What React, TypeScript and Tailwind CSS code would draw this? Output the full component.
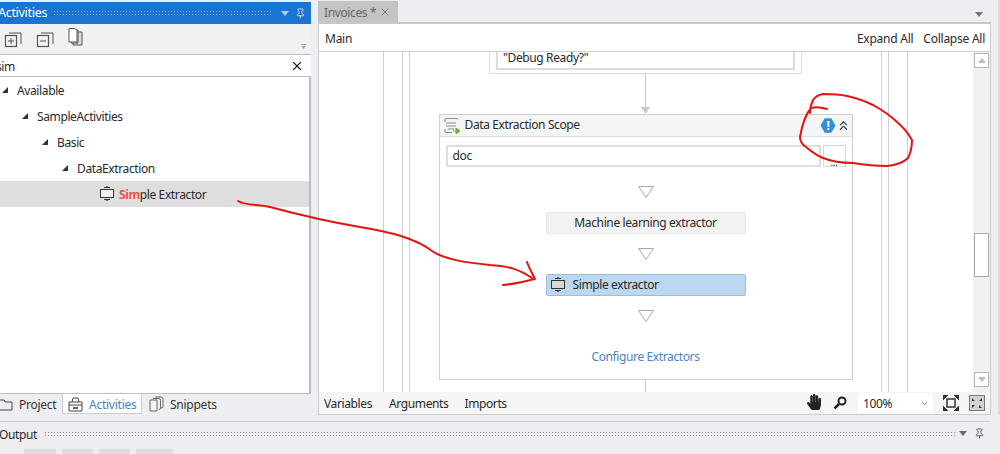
import React from "react";
import { ChevronsUp, ChevronDown, X, Pin } from "lucide-react";
import { FaHandPaper } from "react-icons/fa";

function Extractor({ fill }: { fill: string }) {
  return (
    <svg width="16" height="16" viewBox="0 0 16 16" className="shrink-0">
      <rect x="1.500" y="3.500" width="13" height="8" fill={fill} stroke="#333" />
      <path d="M5 1.500h6M5 13.500h6" stroke="#333" fill="none" />
      <path d="M8 0l2 1.500H6zM8 15l2-1.500H6z" fill="#333" />
    </svg>
  );
}

function Down() {
  return (
    <svg width="16" height="12" viewBox="0 0 16 12" className="shrink-0">
      <path d="M0.500 0.500h15L8 11.500z" fill="#fff" stroke="#a8a8a8" />
    </svg>
  );
}

function TreeRow({ indent, label }: { indent: string; label: string }) {
  return (
    <div className={`flex h-[26px] items-center ${indent}`}>
      <svg width="8" height="8" viewBox="0 0 8 8" className="mr-[8px]">
        <path d="M7 1v6H1z" fill="#333" />
      </svg>
      <span className="pt-[2px]">{label}</span>
    </div>
  );
}

function ActivitiesPanel() {
  return (
    <aside className="flex w-[311px] shrink-0 flex-col pt-[2px]">
      <div className="flex h-[22px] items-center bg-[#1b74d2] text-white">
        <span className="-ml-[2px] w-[55px] shrink-0 pt-[1px] text-[12.500px] tracking-[-0.3px]">Activities</span>
        <div className="h-[6px] w-[219px] bg-[radial-gradient(#7db4ee_0.8px,transparent_1px)] bg-[length:3px_3px]" />
        <svg width="8" height="5" viewBox="0 0 8 5" className="ml-[9px]">
          <path d="M0 0h8L4 5z" fill="#a9cdf2" />
        </svg>
        <Pin size={11} className="ml-[6px] text-[#cfe3f8]" />
      </div>
      <div className="relative flex h-[30px] items-center bg-[#f1f1f3] pl-[4px]">
        <svg width="18" height="18" viewBox="0 0 18 18" fill="none" stroke="#555">
          <path d="M5 3h12v11" />
          <rect x="1.500" y="5.500" width="11" height="11" strokeWidth="1.200" />
          <path d="M4 11h6M7 8v6" />
        </svg>
        <svg width="18" height="18" viewBox="0 0 18 18" fill="none" stroke="#555" className="ml-[14px]">
          <path d="M5 3h12v11" />
          <rect x="1.500" y="5.500" width="11" height="11" strokeWidth="1.200" />
          <path d="M4 11h6" />
        </svg>
        <svg width="16" height="18" viewBox="0 0 16 18" fill="none" stroke="#555" className="ml-[14px] -mt-[4px]">
          <path d="M5 4h9v13H5z" fill="#ddd" />
          <path d="M3 2h7v13H3z" fill="#f1f1f3" />
          <path d="M1 0.500h6l2 2V14H1z" fill="#fff" />
        </svg>
        <div className="absolute bottom-[5px] right-[5px] flex flex-col items-center gap-[1px]">
          <div className="h-px w-[5px] bg-[#aaa]" />
          <svg width="5" height="3" viewBox="0 0 5 3">
            <path d="M0 0h5L2.500 3z" fill="#aaa" />
          </svg>
        </div>
      </div>
      <div className="flex h-[23px] items-center justify-between border-y border-[#bdbdbd] bg-white pr-[7px]">
        <span className="-ml-[4px] pt-[2px]">sim</span>
        <X size={14} className="text-[#222]" />
      </div>
      <div className="h-[317px] border-r-2 border-b border-[#bdbdbd] bg-white">
        <TreeRow indent="pl-[1px]" label="Available" />
        <TreeRow indent="pl-[21px]" label="SampleActivities" />
        <TreeRow indent="pl-[41px]" label="Basic" />
        <TreeRow indent="pl-[61px]" label="DataExtraction" />
        <div className="flex h-[26px] items-center bg-[#dedede] pl-[99px]">
          <Extractor fill="#f2f2ec" />
          <span className="ml-[4px] pt-[2px]">
            <span className="font-bold text-[#f0524a]">Sim</span>ple Extractor
          </span>
        </div>
      </div>
      <div className="flex h-[20px] items-stretch tracking-[-0.25px] text-[#333]">
        <div className="flex w-[62px] items-center">
          <svg width="14" height="13" viewBox="0 0 14 13" fill="none" stroke="#444" className="-ml-[1px]">
            <path d="M0 2h5l1 2h7v8H0" />
          </svg>
          <span className="ml-[6px] pt-[2px]">Project</span>
        </div>
        <div className="flex w-[80px] items-center border-x border-b border-[#ccc] bg-white pl-[5px] text-[#4a80bd]">
          <svg width="15" height="16" viewBox="0 0 15 16" fill="none" stroke="#444">
            <path d="M1 6h13v9H1zM4 6l1-4h5l1 4M1 9h13" />
            <path d="M5 11l5 2M5 13l5-2" />
          </svg>
          <span className="ml-[6px] pt-[2px]">Activities</span>
        </div>
        <div className="flex items-center pl-[7px]">
          <svg width="15" height="16" viewBox="0 0 15 16" fill="none" stroke="#666">
            <path d="M6 1h6q2 0 2 2v8q0 1-2 1" />
            <path d="M4 2.500h6q1.500 0 1.500 2v8q0 1-1.500 1" />
            <path d="M1 4h7v11H1z" fill="#f4f4f4" />
          </svg>
          <span className="ml-[6px] pt-[2px]">Snippets</span>
        </div>
      </div>
    </aside>
  );
}

function Canvas() {
  return (
    <div className="flex min-w-0 flex-1 bg-white pl-[64px] pr-[65px]">
      <div className="flex flex-1 border-x border-[#cfcfcf] pl-[18px] pr-[18px]">
        <div className="flex flex-1 border-x border-[#cfcfcf] pl-[6px] pr-[6px]">
          <div className="flex flex-1 flex-col items-center border-x border-[#cfcfcf]">
            <div className="h-[22px] w-[313px] shrink-0 border-x border-b border-[#dcdcdc] px-[6px] pb-[3px]">
              <div className="h-full border-x-2 border-b-2 border-[#dcdcdc] pl-[5px] leading-[12px]">"Debug Ready?"</div>
            </div>
            <div className="h-[33px] w-px shrink-0 bg-[#c8c8c8]" />
            <svg width="9" height="7" viewBox="0 0 9 7" className="shrink-0">
              <path d="M0 0h9L4.500 7z" fill="#c8c8c8" />
            </svg>
            <div className="flex h-[266px] w-[414px] shrink-0 flex-col items-center border border-[#d0d0d0]">
              <div className="flex h-[22px] w-full shrink-0 items-center border-b border-[#e0e0e0] bg-[#f5f5f5] pl-[3px] pr-[1px]">
                <svg width="18" height="17" viewBox="0 0 18 17" fill="none" stroke="#8a8a8a" className="shrink-0">
                  <path d="M2 5V2.500q0-1 1-1h11q1 0 1 1M2 12v2.500q0 1 1 1h6" />
                  <path d="M3 6h10M3 9h10M5 12h6" />
                  <path d="M10 14h4M13 11l4 3-4 3z" stroke="#6bb04a" fill="#6bb04a" />
                </svg>
                <span className="ml-[4px] flex-1 pb-[2px]">Data Extraction Scope</span>
                <div className="z-10 flex h-[15px] w-[15px] items-center justify-center bg-[#2e90dc] text-[12px] font-bold leading-none text-white [clip-path:polygon(28%_2%,72%_2%,100%_50%,72%_98%,28%_98%,0_50%)]">!</div>
                <ChevronsUp size={15} className="text-[#34495e]" />
              </div>
              <div className="mt-[8px] flex w-full shrink-0 justify-between px-[6px]">
                <div className="flex h-[22px] w-[375px] items-center border-2 border-[#dedede] pl-[5px]">doc</div>
                <div className="flex h-[22px] w-[23px] items-end justify-center border border-[#d8d8d8] text-[10px] leading-[8px]">...</div>
              </div>
              <div className="mt-[19px]"><Down /></div>
              <div className="mt-[14px] flex h-[22px] w-[200px] shrink-0 items-center justify-center rounded-[2px] border border-[#e5e5e5] bg-[#f2f2f2] pb-[1px]">
                Machine learning extractor
              </div>
              <div className="mt-[14px]"><Down /></div>
              <div className="mt-[14px] flex h-[22px] w-[200px] shrink-0 items-center rounded-[2px] border border-[#9dbdd8] bg-[#bbd8f0] pl-[3px]">
                <Extractor fill="#d8d8d0" />
                <span className="ml-[7px]">Simple extractor</span>
              </div>
              <div className="mt-[14px]"><Down /></div>
              <div className="mt-[26px] text-[#4a85c0]">Configure Extractors</div>
            </div>
            <div className="h-[12px] w-px shrink-0 bg-[#c8c8c8]" />
          </div>
        </div>
      </div>
    </div>
  );
}

function Scrollbar() {
  return (
    <div className="flex w-[17px] shrink-0 flex-col items-center bg-[#f1f1f1] pt-[1px] pb-[5px]">
      <div className="flex h-[15px] w-[15px] items-center justify-center border border-[#b5b5b5] bg-white">
        <svg width="8" height="5" viewBox="0 0 8 5"><path d="M4 0l4 5H0z" fill="#bbb" /></svg>
      </div>
      <div className="mt-[165px] h-[44px] w-[15px] border border-[#aaa] bg-white" />
      <div className="mt-auto flex h-[15px] w-[15px] items-center justify-center border border-[#b5b5b5] bg-white">
        <svg width="8" height="5" viewBox="0 0 8 5"><path d="M0 0h8L4 5z" fill="#bbb" /></svg>
      </div>
    </div>
  );
}

function Designer() {
  return (
    <main className="flex w-[673px] shrink-0 flex-col">
      <div className="flex h-[22px] items-stretch justify-between pt-[1px]">
        <div className="flex w-[80px] items-center justify-between bg-[#c4c4c4] pl-[6px] pr-[7px] text-[#666]">
          <span className="pt-[2px]">Invoices *</span>
          <X size={12} className="text-[#777]" />
        </div>
        <svg width="8" height="5" viewBox="0 0 8 5" className="mr-[8px] mt-[11px]">
          <path d="M0 0h8L4 5z" fill="#777" />
        </svg>
      </div>
      <div className="flex flex-col border-x border-b border-[#cccccc]">
        <div className="flex h-[30px] items-center justify-between border-t-2 border-b border-t-[#c8c8c8] border-b-[#d0d0d0] bg-white pl-[6px] pt-[2px] pr-[5px] tracking-[-0.25px]">
          <span>Main</span>
          <div className="flex gap-[10px]">
            <span>Expand All</span>
            <span>Collapse All</span>
          </div>
        </div>
        <div className="flex h-[340px] min-h-0">
          <Canvas />
          <Scrollbar />
        </div>
        <div className="flex h-[22px] items-center bg-[#f5f5f6] pl-[5px]">
          <span className="pt-[2px]">Variables</span>
          <span className="ml-[17px] pt-[2px]">Arguments</span>
          <span className="ml-[16px] pt-[2px]">Imports</span>
          <FaHandPaper size={16} className="ml-auto -mt-[2px] text-[#222]" />
          <svg width="14" height="14" viewBox="0 0 14 14" className="ml-[11px]" fill="none" stroke="#222">
            <circle cx="9" cy="5" r="3.500" strokeWidth="2" />
            <path d="M6 8l-4.500 4.500" strokeWidth="2.500" />
          </svg>
          <div className="ml-[11px] flex h-[20px] w-[75px] items-center justify-between bg-white pl-[5px] pr-[4px]">
            <span className="pt-[2px]">100%</span>
            <ChevronDown size={9} className="text-[#555]" />
          </div>
          <svg width="16" height="16" viewBox="0 0 16 16" className="ml-[10px]" fill="none" stroke="#333">
            <rect x="4" y="4" width="8" height="8" strokeWidth="1.500" />
            <path d="M0 5V0h5zM11 0h5v5zM16 11v5h-5zM5 16H0v-5z" fill="#333" />
          </svg>
          <svg width="16" height="16" viewBox="0 0 16 16" className="ml-[10px] mr-[5px]">
            <rect x="0.500" y="0.500" width="15" height="15" fill="#cfd4d4" stroke="#777" />
            <path d="M3 3l3 3H3zM13 3v3h-3zM3 13v-3h3zM13 13h-3v-3z" fill="#333" />
          </svg>
        </div>
      </div>
    </main>
  );
}

export default function App() {
  return (
    <div className="relative flex h-[454px] w-[1000px] flex-col overflow-hidden bg-[#eeeef2] font-['Noto_Sans',sans-serif] text-[12px] tracking-[-0.38px] text-[#2a2a2a]">
      <div className="flex h-[415px] shrink-0 gap-[7px]">
        <ActivitiesPanel />
        <Designer />
        <div className="w-[2px] bg-[#dddddd]" />
      </div>
      <div className="mt-[6px] flex h-[24px] w-[990px] shrink-0 items-center border-t border-[#cfcfcf]">
        <span className="-ml-[1px] w-[45px] shrink-0 pt-[2px]">Output</span>
        <div className="h-[6px] flex-1 bg-[radial-gradient(#8f8f8f_0.6px,transparent_0.8px)] bg-[length:3px_3px]" />
        <svg width="8" height="5" viewBox="0 0 8 5" className="ml-[2px]">
          <path d="M0 0h8L4 5z" fill="#666" />
        </svg>
        <Pin size={11} className="ml-[7px] mr-[5px] text-[#555]" />
      </div>
      <div className="mt-[4px] flex gap-[6px] pl-[24px]">
        <div className="h-[5px] w-[32px] bg-[#dcdcdc]" />
        <div className="h-[5px] w-[31px] bg-[#dcdcdc]" />
        <div className="h-[5px] w-[31px] bg-[#dcdcdc]" />
        <div className="h-[5px] w-[37px] bg-[#dcdcdc]" />
      </div>
      <svg width="1000" height="454" viewBox="0 0 1000 454" fill="none" stroke="#e41212" strokeWidth="2" strokeLinecap="round" strokeLinejoin="round" className="pointer-events-none absolute left-0 top-0">
        <path d="M238 201C246 206 258 204 270 207C300 215 330 222 360 227C390 232 415 238 432 251C445 260 470 263 490 265C510 266 520 270 532 278" />
        <path d="M503 285C515 284 525 281 535 279C532 273 529 268 527 262" />
        <path d="M827 109C820 107 815 107 811 108C806 114 802 125 800 137C800 142 803 145 806 147C812 152 818 156 823 158C833 162 843 163 853 163C865 165 877 166 887 166C897 165 904 162 908 158C911 152 912 146 912 140C908 133 903 127 897 122C890 115 882 110 873 105C865 101 856 98 847 96C838 94 830 94 823 94C818 95 815 97 813 100C811 104 810 108 810 113" />
      </svg>
    </div>
  );
}
